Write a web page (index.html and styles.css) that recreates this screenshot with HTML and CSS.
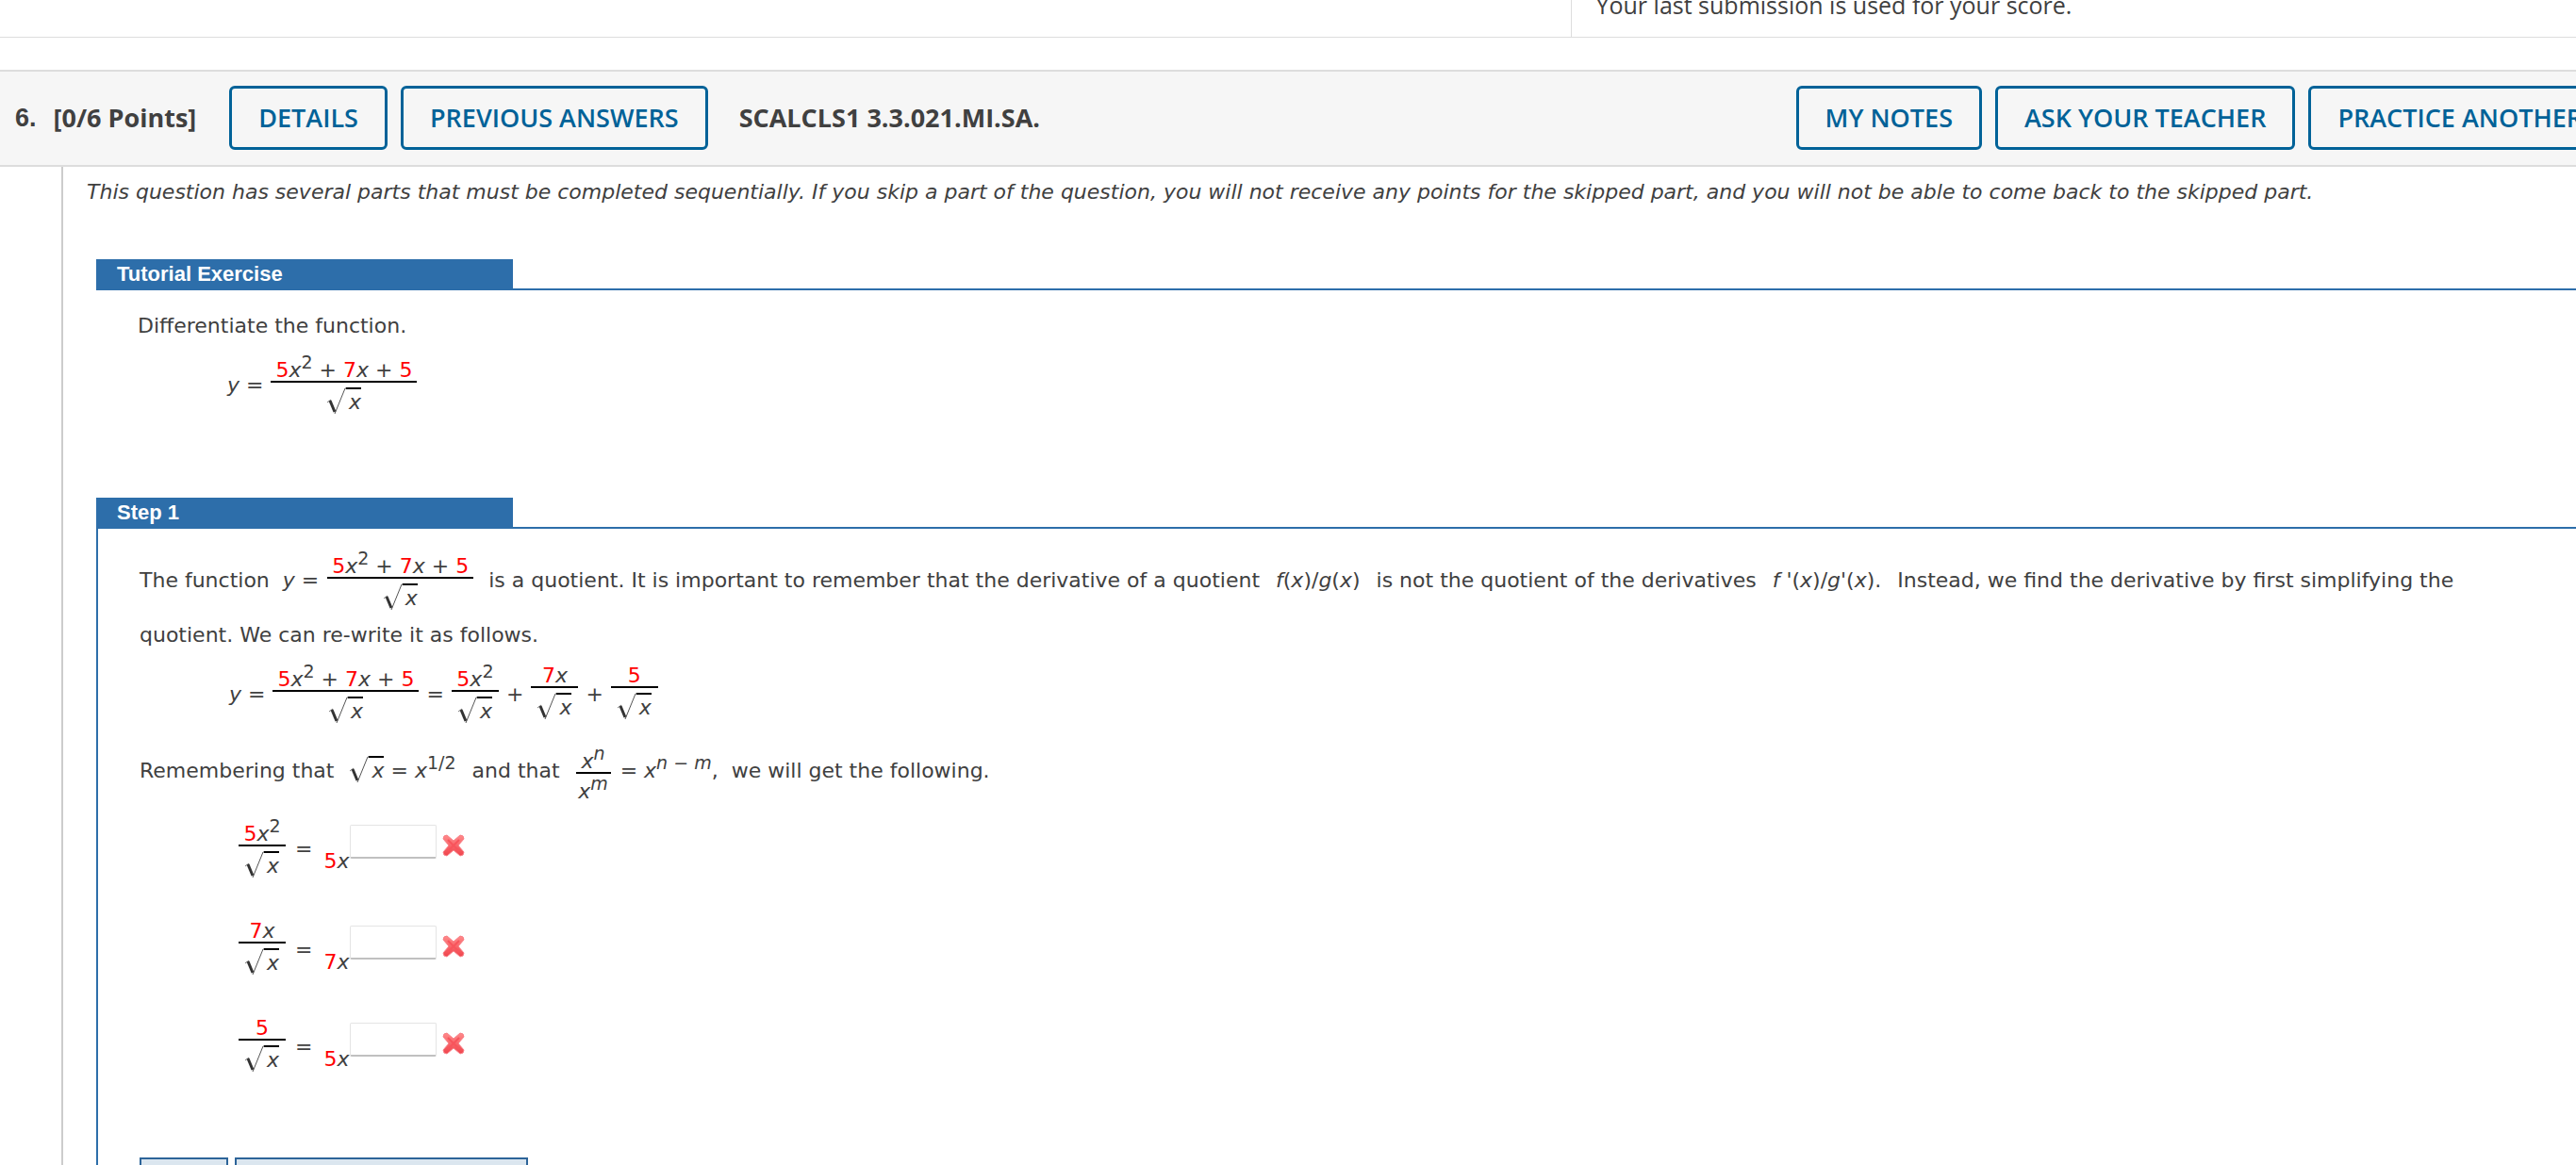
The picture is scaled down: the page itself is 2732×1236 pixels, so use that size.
FILE: index.html
```
<!DOCTYPE html>
<html lang="en">
  <head>
    <meta charset="utf-8">
    <meta name="viewport" content="width=device-width">
    <title>SCALCLS1 3.3.021.MI.SA.</title>
    <link rel="stylesheet" href="styles.css">
  </head>
  <body>

    <!-- shared drawings -->
    <svg class="defs" width="0" height="0">
      <defs>
        <linearGradient id="redFill" x1="0" y1="0" x2="0" y2="1">
          <stop offset="0" stop-color="#ff8a8a"/>
          <stop offset="1" stop-color="#f0444c"/>
        </linearGradient>
        <symbol id="radical" viewBox="0 0 20 29">
          <path d="M0 16 L4 13" fill="none" stroke="#777" stroke-width="1"/>
          <path d="M3 14 L8 26" fill="none" stroke="#333" stroke-width="3"/>
          <path d="M8 28 L19 1 L20 1" fill="none" stroke="#555" stroke-width="1"/>
        </symbol>
        <symbol id="wrong" viewBox="0 0 24 24">
          <path d="M5 1 L12 7 L19 1 Q23 1 23 5 L17 12 L23 19 Q23 23 19 23 L12 17 L5 23 Q1 23 1 19 L7 12 L1 5 Q1 1 5 1Z" fill="url(#redFill)" stroke="#f98088" stroke-width="1"/>
          <path d="M6 6 L18 18 M18 6 L6 18" stroke="#f8545c" stroke-width="2"/>
        </symbol>
      </defs>
    </svg>

    <div class="submission">
      <div class="submission-left"></div>
      <div class="submission-right">Your last submission is used for your score.</div>
    </div>

    <header class="question-bar">
      <span class="number">6.</span>
      <span class="points">[0/6 Points]</span>
      <button class="btn">DETAILS</button>
      <button class="btn">PREVIOUS ANSWERS</button>
      <h1 class="question-name">SCALCLS1 3.3.021.MI.SA.</h1>
      <div class="actions">
        <button class="btn">MY NOTES</button>
        <button class="btn">ASK YOUR TEACHER</button>
        <button class="btn">PRACTICE ANOTHER</button>
      </div>
    </header>

    <main class="question">
      <p class="notice">This question has several parts that must be completed sequentially. If you skip a part of the question, you will not receive any points for the skipped part, and you will not be able to come back to the skipped part.</p>

      <section class="panel tutorial">
        <h2 class="tab">Tutorial Exercise</h2>
        <div class="panel-body">
          <p>Differentiate the function.</p>
          <div class="equation">
            <span><i>y</i> =</span>
            <span class="frac"><span class="top tall"><b>5</b><i>x</i><sup>2</sup> + <b>7</b><i>x</i> + <b>5</b></span><span class="bottom"><svg class="radical"><use href="#radical"/></svg><i class="root">x</i></span></span>
          </div>
        </div>
      </section>

      <section class="panel step">
        <h2 class="tab">Step 1</h2>
        <div class="panel-body">
          <p class="explain">The function &nbsp;<i>y</i> = <span class="frac"><span class="top tall"><b>5</b><i>x</i><sup>2</sup> + <b>7</b><i>x</i> + <b>5</b></span><span class="bottom"><svg class="radical"><use href="#radical"/></svg><i class="root">x</i></span></span>&nbsp; is a quotient. It is important to remember that the derivative of a quotient &nbsp;<span class="math"><i>f</i>(<i>x</i>)/<i>g</i>(<i>x</i>)</span>&nbsp; is not the quotient of the derivatives &nbsp;<span class="math"><i>f</i> '(<i>x</i>)/<i>g</i>'(<i>x</i>).</span>&nbsp; Instead, we find the derivative by first simplifying the quotient. We can re-write it as follows.</p>

          <div class="equation">
            <span><i>y</i> =</span>
            <span class="frac"><span class="top tall"><b>5</b><i>x</i><sup>2</sup> + <b>7</b><i>x</i> + <b>5</b></span><span class="bottom"><svg class="radical"><use href="#radical"/></svg><i class="root">x</i></span></span>
            <span>=</span>
            <span class="frac"><span class="top tall"><b>5</b><i>x</i><sup>2</sup></span><span class="bottom"><svg class="radical"><use href="#radical"/></svg><i class="root">x</i></span></span>
            <span>+</span>
            <span class="frac"><span class="top"><b>7</b><i>x</i></span><span class="bottom"><svg class="radical"><use href="#radical"/></svg><i class="root">x</i></span></span>
            <span>+</span>
            <span class="frac"><span class="top"><b>5</b></span><span class="bottom"><svg class="radical"><use href="#radical"/></svg><i class="root">x</i></span></span>
          </div>

          <p class="remember">Remembering that &nbsp;<span class="math"><svg class="radical"><use href="#radical"/></svg><i class="root">x</i> = <i>x</i><sup>1/2</sup></span>&nbsp; and that &nbsp;<span class="frac powers"><span class="top tall"><i>x</i><sup><i>n</i></sup></span><span class="under tall"><i>x</i><sup><i>m</i></sup></span></span> = <i>x</i><sup><i>n</i> − <i>m</i></sup>,&nbsp; we will get the following.</p>

          <div class="answers">
            <div class="answer">
              <span class="frac"><span class="top tall"><b>5</b><i>x</i><sup>2</sup></span><span class="bottom"><svg class="radical"><use href="#radical"/></svg><i class="root">x</i></span></span>
              <span class="equals">=</span>
              <label class="base" for="power1"><b>5</b><i>x</i></label>
              <input class="power" id="power1" type="text">
              <svg class="wrong"><use href="#wrong"/></svg>
            </div>

            <div class="answer">
              <span class="frac"><span class="top"><b>7</b><i>x</i></span><span class="bottom"><svg class="radical"><use href="#radical"/></svg><i class="root">x</i></span></span>
              <span class="equals">=</span>
              <label class="base" for="power2"><b>7</b><i>x</i></label>
              <input class="power" id="power2" type="text">
              <svg class="wrong"><use href="#wrong"/></svg>
            </div>

            <div class="answer">
              <span class="frac"><span class="top"><b>5</b></span><span class="bottom"><svg class="radical"><use href="#radical"/></svg><i class="root">x</i></span></span>
              <span class="equals">=</span>
              <label class="base" for="power3"><b>5</b><i>x</i></label>
              <input class="power" id="power3" type="text">
              <svg class="wrong"><use href="#wrong"/></svg>
            </div>
          </div>

          <div class="step-buttons">
            <button class="step-btn short" aria-label="Submit"></button>
            <button class="step-btn long" aria-label="Skip"></button>
          </div>
        </div>
      </section>
    </main>

  </body>
</html>
```

FILE: styles.css
```
* {
  box-sizing: border-box;
}

html, body {
  height: 100%;
}

body {
  display: flex;
  flex-direction: column;
  margin: 0;
  overflow: hidden;
  background-color: #fff;
  color: #404040;
  font-family: "DejaVu Sans", Verdana, sans-serif;
  font-size: 22px;
  line-height: 28px;
}

p, h1, h2 {
  margin: 0;
}

.defs {
  position: absolute;
}

/* submission info above the question */
.submission {
  display: flex;
  flex: none;
  height: 40px;
  border-bottom: 1px solid #ddd;
  font-family: "Open Sans", sans-serif;
  font-size: 25px;
}

.submission-left {
  width: 61%;
  border-right: 1px solid #ddd;
}

.submission-right {
  margin-top: -9px;
  padding-left: 26px;
}

/* grey question bar */
.question-bar {
  display: flex;
  flex: none;
  align-items: center;
  height: 103px;
  margin-top: 34px;
  padding-left: 16px;
  padding-bottom: 2px;
  border-top: 2px solid #ddd;
  border-bottom: 2px solid #ddd;
  background-color: #f6f6f6;
  font-family: "Open Sans", sans-serif;
  font-size: 27px;
  white-space: nowrap;
}

.number {
  margin-right: 18px;
  font-family: "Liberation Sans", Arial, sans-serif;
  font-weight: bold;
}

.points {
  margin-right: 35px;
  font-weight: bold;
}

.btn {
  flex: none;
  height: 68px;
  margin-right: 14px;
  padding: 0 28px 1px;
  border: 3px solid #006298;
  border-radius: 6px;
  background-color: transparent;
  color: #006298;
  font-family: "Open Sans", sans-serif;
  font-size: 27px;
  font-weight: 600;
}

.question-name {
  margin-left: 19px;
  font-size: 27px;
  font-weight: bold;
}

/* last button runs off the right edge */
.actions {
  display: flex;
  flex: none;
  margin-left: auto;
  margin-right: -52px;
}

.question {
  flex: 1;
  min-height: 0;
  margin-left: 65px;
  padding: 13px 0 0 25px;
  border-left: 2px solid #ccc;
  overflow: hidden;
}

.notice {
  font-style: italic;
}

/* blue tabbed panels */
.panel {
  margin-left: 10px;
}

.tutorial {
  height: 253px;
  margin-top: 57px;
}

.tab {
  width: 442px;
  height: 31px;
  padding-left: 22px;
  background-color: #2d6eaa;
  color: #fff;
  font-family: "Liberation Sans", Arial, sans-serif;
  font-size: 22px;
  line-height: 32px;
}

.panel-body {
  padding-left: 44px;
  border-top: 2px solid #2d6eaa;
}

.tutorial .panel-body {
  padding-top: 24px;
}

.step .panel-body {
  padding-top: 21px;
  padding-bottom: 40px;
  border-left: 2px solid #2d6eaa;
}

/* math */
b {
  color: #f00;
  font-weight: normal;
}

sup {
  font-size: 19px;
  line-height: 0;
  vertical-align: 9px;
}

.math {
  margin: 0 3px;
  white-space: nowrap;
}

.frac {
  display: inline-flex;
  flex-direction: column;
  text-align: center;
  white-space: nowrap;
}

.top {
  padding: 0 5px;
  line-height: 22px;
}

/* room for an exponent */
.tall {
  padding-top: 8px;
}

.bottom {
  display: flex;
  justify-content: center;
  padding: 5px 7px 0;
  border-top: 2px solid #000;
}

.under {
  border-top: 2px solid #000;
  line-height: 22px;
}

.radical {
  width: 20px;
  height: 29px;
  vertical-align: -6px;
}

.root {
  display: inline-block;
  height: 33px;
  padding-left: 3px;
  border-top: 2px solid #000;
  line-height: 27px;
}

.equation {
  display: flex;
  align-items: center;
  gap: 8px;
  margin-top: 14px;
  padding-left: 95px;
}

.explain {
  padding-right: 80px;
}

.explain .frac {
  margin: 0 2px 8px;
  vertical-align: 15px;
}

.remember {
  margin-top: 17px;
}

.powers {
  margin: 0 3px;
  vertical-align: 10px;
}

.powers .top {
  padding: 8px 6px 0;
}

.answers {
  display: flex;
  flex-direction: column;
  gap: 41px;
  margin-top: 15px;
  padding-left: 105px;
}

.answer {
  display: flex;
  align-items: center;
}

.equals {
  margin: 0 12px 0 10px;
}

.base {
  padding-top: 26px;
}

.power {
  width: 92px;
  height: 36px;
  margin-bottom: 16px;
  border: 1px solid #e4e4e4;
  border-bottom: 2px solid #c0c0c0;
  border-radius: 2px;
  font-size: 22px;
}

.wrong {
  width: 24px;
  height: 24px;
  margin-bottom: 8px;
  margin-left: 6px;
}

.step-buttons {
  display: flex;
  gap: 7px;
  margin-top: 86px;
}

.step-btn {
  height: 40px;
  border: 2px solid #2d6499;
  background-color: #dbe6ef;
}

.short {
  width: 94px;
}

.long {
  width: 311px;
}
```
